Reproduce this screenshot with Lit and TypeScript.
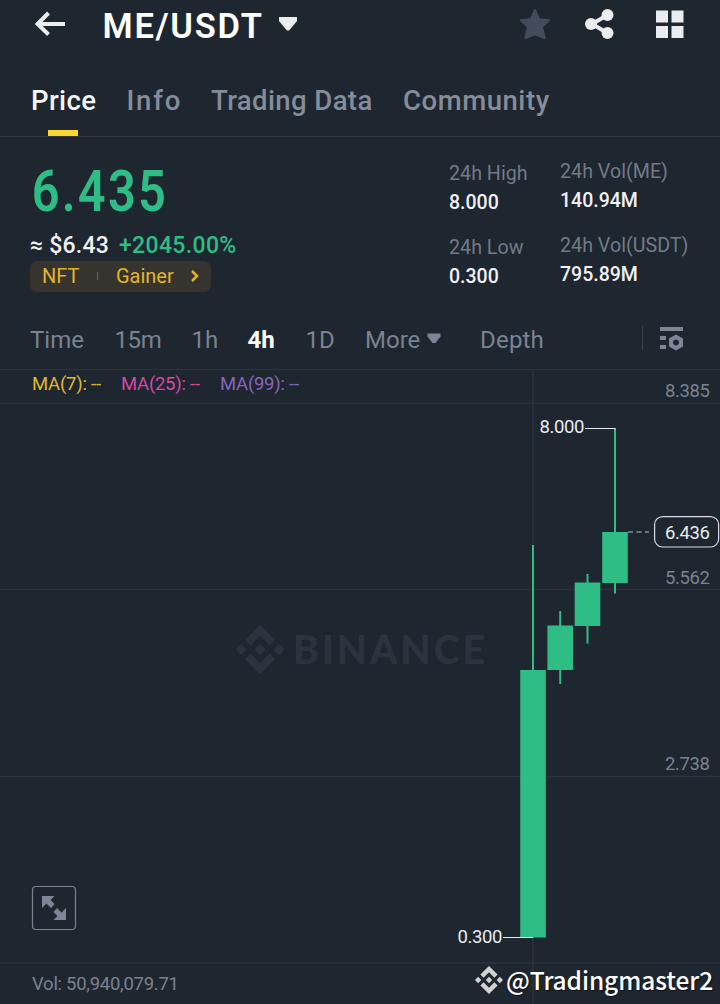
import { LitElement, html, svg, css } from "lit";
import { customElement } from "lit/decorators.js";

const BRAND_PATH =
  "M16.624 13.9202l2.7175 2.7154-7.353 7.353-7.353-7.352 2.7175-2.7164 4.6355 4.6595 4.6356-4.6595zm4.6366-4.6366L24 12l-2.7154 2.7164L18.5682 12l2.6924-2.7164zm-9.272.001l2.7163 2.6914-2.7164 2.7174v-.001L9.2721 12l2.7164-2.7154zm-9.2722-.001L5.4088 12l-2.6914 2.6924L0 12l2.7164-2.7164zM11.9885.0115l7.353 7.329-2.7174 2.7154-4.6356-4.6356-4.6355 4.6595-2.7174-2.7154 7.353-7.353z";

// Candle geometry in chart coordinates: centre, wick range, body range.
const CANDLES = [
  { x: 533, high: 176, top: 301, bottom: 568.5, low: 568.5 },
  { x: 560.2, high: 242, top: 256.5, bottom: 301, low: 315 },
  { x: 587.5, high: 205, top: 213.5, bottom: 257, low: 274.5 },
  { x: 615, high: 59, top: 163, bottom: 214, low: 224.5 },
];

@customElement("price-chart")
export class PriceChart extends LitElement {
  static styles = css`
    :host { display: block; height: 635px; }
    svg { display: block; }
    text { font-family: Roboto, "Liberation Sans", sans-serif; font-size: 18.5px; }
    .grid { stroke: #2c333c; stroke-width: 1.5; fill: none; }
    .axis { fill: #7b8290; }
    .ma7 { fill: #e3b62f; }
    .ma25 { fill: #d448a4; }
    .ma99 { fill: #8765bd; }
    .mark { fill: #e9ebf0; }
    .lead { stroke: #e9ebf0; stroke-width: 1.2; }
    .dash { stroke: #b5bac3; stroke-width: 1.2; stroke-dasharray: 5 3.5; }
    .candle { fill: #2ebd85; }
    .tag { fill: #1e262f; stroke: #d9dce2; stroke-width: 1.2; }
    .brand { fill: #2d333e; }
    .word { font-family: Lato, sans-serif; font-weight: 900; font-size: 39px; }
    .expand { fill: none; stroke: #7b8290; stroke-width: 1.2; }
    .glyph { fill: #7d8596; }
  `;

  render() {
    return html`<svg width="720" height="635" viewBox="0 0 720 635">
      <path class="grid" d="M0 .2H720M0 34.5H720M0 220.5H720M0 407.5H720M0 594H720M533 0V635" />
      <g class="brand">
        <path transform="translate(235.5 256) scale(2.05)" d=${BRAND_PATH} />
        <text class="word" x="293" y="295" textLength="192">BINANCE</text>
      </g>
      <text class="ma7" x="32" y="21" textLength="69">MA(7): --</text>
      <text class="ma25" x="121" y="21" textLength="79">MA(25): --</text>
      <text class="ma99" x="220" y="21" textLength="79">MA(99): --</text>
      <text class="axis" x="665" y="28" textLength="45">8.385</text>
      <text class="axis" x="665" y="215" textLength="45">5.562</text>
      <text class="axis" x="665" y="401" textLength="45">2.738</text>
      ${CANDLES.map(
        (c) => svg`<g class="candle">
          <rect x=${c.x - 1} y=${c.high} width="2" height=${c.low - c.high} />
          <rect x=${c.x - 12.8} y=${c.top} width="25.6" height=${c.bottom - c.top} />
        </g>`
      )}
      <text class="mark" x="539.5" y="64" textLength="45">8.000</text>
      <path class="lead" d="M585 59.5H615.5M503 568.5H533" />
      <text class="mark" x="457.5" y="574" textLength="45">0.300</text>
      <path class="dash" d="M628 163H649" />
      <rect class="tag" x="654.6" y="147.6" width="64" height="30.4" rx="8" />
      <text class="mark" x="665" y="170" textLength="45">6.436</text>
      <rect class="expand" x="32.5" y="517.5" width="43" height="43" rx="3.5" />
      <path class="glyph" d="M42 527h12.500l-4 4 4 4-3.500 4-4.500-4.500-4.500 4.500zM66 551h-12.500l4-4-4-4 3.500-4 4.500 4.500 4.500-4.500z" />
      <text class="axis" x="32" y="621" textLength="147">Vol: 50,940,079.71</text>
    </svg>`;
  }
}

@customElement("app-root")
export class AppRoot extends LitElement {
  static styles = css`
    :host {
      display: block; position: relative; width: 720px; height: 1004px; overflow: hidden;
      background: #1e262f; color: #f0f1f5;
      font-family: Roboto, "Liberation Sans", sans-serif; white-space: nowrap;
    }
    * { box-sizing: border-box; }
    svg { display: block; flex: none; }
    .top { height: 56px; padding: 0 36px 8px 34px; display: flex; align-items: center; }
    .back { margin-right: 34.5px; }
    .pair { font-size: 34.5px; line-height: 40px; font-weight: 600; letter-spacing: 1.7px; color: #fff; width: 175.5px; padding-top: 3px; }
    .actions { display: flex; align-items: center; margin-left: auto; gap: 33px; }
    .actions svg:last-child { margin-left: 1px; }
    .tabs { height: 81px; padding: 25px 0 0 31px; display: flex; border-bottom: 1px solid #323841; font-size: 27.5px; line-height: 40px; font-weight: 500; color: #858c9a; }
    .tab { height: 55px; letter-spacing: .55px; }
    .t1 { width: 95.5px; position: relative; color: #f5f5f8; letter-spacing: .4px; }
    .t1::after { content: ""; position: absolute; left: 17px; bottom: 0; width: 30px; height: 6px; background: #fcd535; }
    .t2 { width: 84.5px; letter-spacing: 1.8px; }
    .t3 { width: 192px; letter-spacing: .4px; }
    .summary { height: 175px; display: flex; padding-left: 30px; }
    .quote { width: 419px; padding-top: 25px; }
    .last { font-size: 57px; line-height: 60px; height: 58px; font-weight: 600; color: #2ebd85; width: 150px; letter-spacing: 2.6px; transform: scaleX(.855); transform-origin: 0 0; padding-left: 2px; }
    .sub { display: flex; gap: 10px; font-size: 23px; line-height: 30px; font-weight: 500; margin-top: 11px; letter-spacing: .2px; }
    .gain { color: #2ebd85; letter-spacing: .35px; }
    .tags { width: 181px; height: 31px; border-radius: 7px; background: #35342e; color: #e5b32b; display: flex; align-items: center; font-size: 20px; padding: 0 11px 1px 12px; }
    .bar { width: 1px; height: 8px; background: #786630; margin: 0 18px 0 17.500px; }
    .tags svg { margin-left: auto; }
    .col { padding-top: 23px; width: 111px; font-size: 19.7px; }
    .col.vol { padding-top: 21px; }
    .label { color: #737a87; line-height: 28px; }
    .value { font-weight: 500; line-height: 28px; height: 46px; padding-top: 1px; font-size: 19.5px; }
    .frames { height: 57px; padding: 13px 0 0 30px; display: flex; font-size: 24px; line-height: 30px; color: #7b8290; }
    .frames .on { color: #fff; font-weight: 700; }
    .f1 { width: 84.5px; } .f2 { width: 77px; letter-spacing: -.4px; } .f3 { width: 56px; } .f4 { width: 58px; } .f5 { width: 59.5px; } .f6 { width: 115px; display: flex; gap: 7px; } .f7 { width: 162px; letter-spacing: .2px; }
    .f6 svg { margin-top: 8px; }
    .split { width: 1px; height: 24px; background: #3b424d; margin: 1px 16px 0 0; }
    .frames .prefs { margin-top: 1px; }
    .credit { position: absolute; right: 7px; bottom: 5px; display: flex; align-items: center; gap: 3px; color: #fff; font: 500 24.5px/38px "Noto Sans CJK SC", sans-serif; letter-spacing: -.1px; text-shadow: 1px 1px 1px #111; }
    .credit svg { fill: #d2d2d2; }
  `;

  render() {
    return html`
      <div class="top">
        <svg class="back" width="34" height="28" viewBox="0 0 34 28" fill="none" stroke="#eaecef" stroke-width="4"><path d="M31 14H4M14.5 3L3.6 14l10.9 10.5" /></svg>
        <div class="pair">ME/USDT</div>
        <svg width="20" height="16" viewBox="0 0 20 16"><path fill="#eaecef" d="M1 1h18v4l-7.500 9q-1.500 1.500-3 0L1 5z" /></svg>
        <div class="actions">
          <svg width="32" height="32" viewBox="0 0 32 32"><path fill="#434c5a" stroke="#434c5a" stroke-width="2" stroke-linejoin="round" d="M16 2l4.1 9.2 9.9 1-7 6.8 2.700 11L16 26.2 6.300 30l2.700-11L2 12.2l9.900-1z" /></svg>
          <svg width="32" height="32" viewBox="0 0 32 32" fill="#eaecef"><path d="M23.500 7L8 16l15.500 9" stroke="#eaecef" stroke-width="4" fill="none" /><circle cx="7" cy="16" r="6" /><circle cx="23.500" cy="7" r="6" /><circle cx="23.500" cy="25" r="6" /></svg>
          <svg width="34" height="32" viewBox="0 0 34 32"><path fill="#eaecef" d="M6 2.500h12v12H6zM21.500 2.500h12v12h-12zM6 18h12v12H6zM21.500 18h12v12h-12z" /></svg>
        </div>
      </div>
      <div class="tabs">
        <div class="tab t1">Price</div><div class="tab t2">Info</div><div class="tab t3">Trading Data</div><div class="tab">Community</div>
      </div>
      <div class="summary">
        <div class="quote">
          <div class="last">6.435</div>
          <div class="sub"><span>≈ $6.43</span><span class="gain">+2045.00%</span></div>
          <div class="tags">
            <span>NFT</span><i class="bar"></i><span>Gainer</span>
            <svg width="10" height="12" viewBox="0 0 10 12" fill="none" stroke="#e5b32b" stroke-width="2.500"><path d="M2 1l5 5-5 5" /></svg>
          </div>
        </div>
        <div class="col">
          <div class="label">24h High</div><div class="value">8.000</div>
          <div class="label">24h Low</div><div class="value">0.300</div>
        </div>
        <div class="col vol">
          <div class="label">24h Vol(ME)</div><div class="value">140.94M</div>
          <div class="label">24h Vol(USDT)</div><div class="value">795.89M</div>
        </div>
      </div>
      <div class="frames">
        <span class="f1">Time</span><span class="f2">15m</span><span class="f3">1h</span><span class="f4 on">4h</span><span class="f5">1D</span>
        <span class="f6">More <svg width="14" height="11" viewBox="0 0 14 11"><path fill="#7d8596" d="M.5.500h13v3L8.500 10h-3L.5 3.500z" /></svg></span>
        <span class="f7">Depth</span>
        <i class="split"></i>
        <svg class="prefs" width="26" height="26" viewBox="0 0 26 26" fill="#7d8596"><path d="M1 1h23v4H1zM1 10h6v4H1zM1 19h6v4H1z" /><path fill-rule="evenodd" d="M17 8.500l7 4v8l-7 4-7-4v-8zM17 13.500a3 3 0 1 0 .01 0z" /></svg>
      </div>
      <price-chart></price-chart>
      <div class="credit"><svg width="28" height="28" viewBox="0 0 24 24"><path d=${BRAND_PATH} /></svg><span>@Tradingmaster2</span></div>
    `;
  }
}
